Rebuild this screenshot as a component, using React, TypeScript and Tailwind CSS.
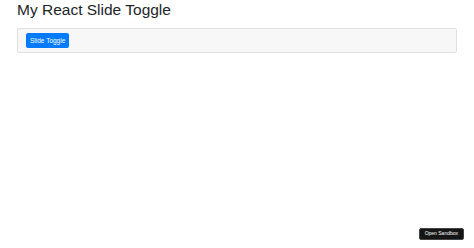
import React from "react";

export default function App() {
  return (
    <div className="min-h-[248px] bg-white px-[17px] font-['Liberation_Sans',Arial,sans-serif] text-[#212529]">
      <h1 className="m-0 text-[15.5px] leading-[20px] font-normal">My React Slide Toggle</h1>
      <div className="mt-[8px] flex h-[25px] items-start rounded-[2px] border border-[#e0e0e0] bg-[#f7f7f7] px-[8px] pt-[4px]">
        <button className="h-[15px] rounded-[2px] bg-[#007bff] px-[4px] text-[6.5px] leading-[15px] text-white">
          Slide Toggle
        </button>
      </div>
      <div className="fixed right-[10px] bottom-[8px] flex h-[12px] items-center rounded-[2px] border border-[#444] bg-[#151515] px-[5px] text-[5px] text-white">
        Open Sandbox
      </div>
    </div>
  );
}
